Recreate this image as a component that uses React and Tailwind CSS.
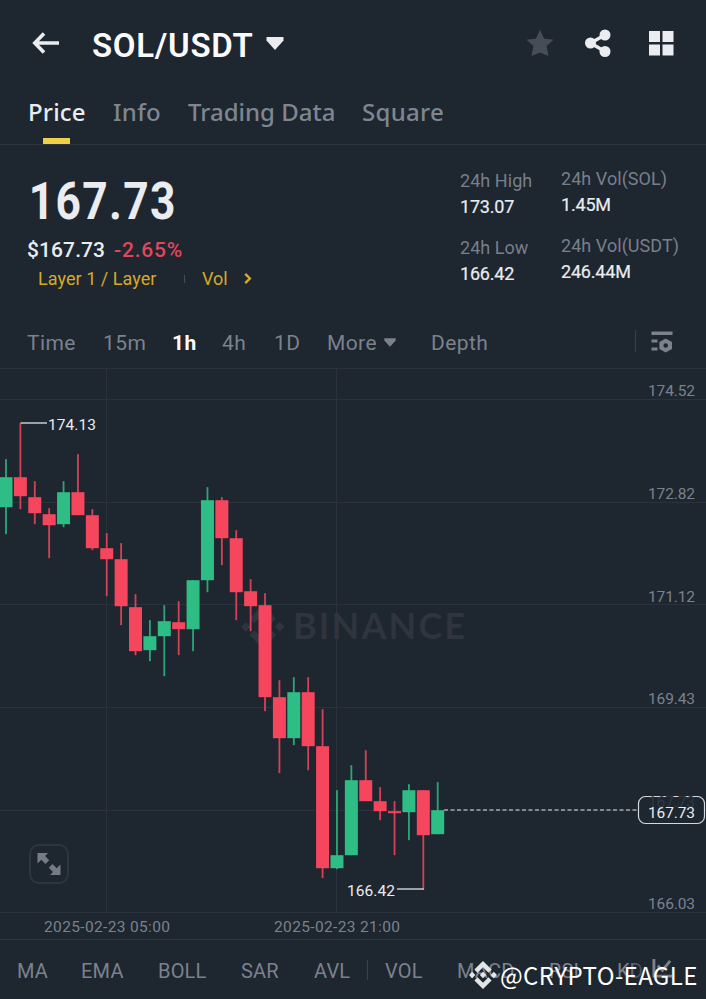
import { useState } from 'react';
import { clsx } from 'clsx';

// [direction, high, bodyTop, bodyBottom, low] in chart pixels
const candles = [
  ['up', 91, 109, 139, 166],
  ['down', 55, 109, 128, 141],
  ['down', 113, 129, 145, 156],
  ['down', 140, 146, 157, 190],
  ['up', 113, 124, 156, 159],
  ['down', 86, 124, 147, 147],
  ['down', 141, 147, 180, 182],
  ['down', 165, 180, 191, 228],
  ['down', 175, 191, 238, 257],
  ['down', 226, 239, 283, 287],
  ['up', 252, 268, 282, 293],
  ['up', 237, 253, 268, 308],
  ['down', 233, 254, 261, 287],
  ['up', 212, 212, 261, 283],
  ['up', 119, 132, 212, 224],
  ['down', 129, 132, 170, 197],
  ['down', 162, 170, 224, 252],
  ['down', 211, 223, 238, 263],
  ['down', 225, 237, 329, 343],
  ['down', 312, 329, 370, 405],
  ['up', 309, 324, 370, 377],
  ['down', 309, 324, 378, 402],
  ['down', 341, 378, 500, 510],
  ['up', 422, 487, 500, 501],
  ['up', 397, 412, 487, 487],
  ['down', 382, 412, 433, 433],
  ['down', 419, 433, 443, 452],
  ['down', 433, 443, 445, 487],
  ['up', 416, 422, 444, 472],
  ['down', 422, 422, 467, 521],
  ['up', 414, 442, 466, 466],
];

const priceAxis = [
  { y: 31, label: '174.52' },
  { y: 134, label: '172.82' },
  { y: 236.5, label: '171.12' },
  { y: 339, label: '169.43' },
  { y: 442, label: '' },
  { y: 544, label: '166.03' },
];

const tabs = [
  { name: 'Price', width: 'w-[85px] tracking-[0.2px]' },
  { name: 'Info', width: 'w-[75px] tracking-[0.3px]' },
  { name: 'Trading Data', width: 'w-[174px]' },
  { name: 'Square', width: 'w-[90px] tracking-[0.3px]' },
];

const intervals = [
  { name: 'Time', width: 'w-[76px]' },
  { name: '15m', width: 'w-[69px]' },
  { name: '1h', width: 'w-[50px]' },
  { name: '4h', width: 'w-[52px]' },
  { name: '1D', width: 'w-[53px]' },
  { name: 'More', width: 'w-[104px]' },
  { name: 'Depth', width: 'w-[70px]' },
];

const indicators = [
  { name: 'MA', width: 'w-[64px]' },
  { name: 'EMA', width: 'w-[77px]' },
  { name: 'BOLL', width: 'w-[83px]' },
  { name: 'SAR', width: 'w-[73px]' },
  { name: 'AVL', width: 'w-[71px]' },
  { name: 'VOL', width: 'w-[72px]' },
  { name: 'MACD', width: 'w-[92px]' },
  { name: 'RSI', width: 'w-[68px]' },
  { name: 'KD', width: 'w-[30px]' },
];

function CaretDown({ className }) {
  return (
    <svg viewBox="0 0 18 13" className={className} fill="currentColor">
      <path d="M0.5 0h17v3.5L9 13 0.5 3.5z" />
    </svg>
  );
}

function BinanceMark({ className }) {
  return (
    <svg viewBox="0 0 126.61 126.61" className={className} fill="currentColor">
      <path d="M38.73 53.2l24.59-24.58 24.6 24.6 14.3-14.31L63.32 0l-38.9 38.9zM0 63.31L14.3 49l14.31 14.31-14.31 14.3zM38.73 73.41l24.59 24.59 24.6-24.6 14.31 14.29-38.9 38.91-38.91-38.88zM98 63.31L112.3 49l14.31 14.3-14.31 14.32z" />
      <path d="M77.83 63.3L63.32 48.78 48.79 63.3l14.53 14.53z" />
    </svg>
  );
}

function Header() {
  return (
    <header className="flex h-[88px] items-center px-8 pb-0.5">
      <svg viewBox="0 0 28 22" className="h-[22px] w-7 text-[#eaecef]" fill="none" stroke="currentColor" strokeWidth="3.6">
        <path d="M27 11H3M12 1.5L2.8 11l9.2 9.5" />
      </svg>
      <h1 className="ml-[32px] mt-[4px] w-[160px] whitespace-nowrap font-[Roboto] text-[33px] font-semibold leading-none tracking-[0.7px] text-[#fafbfc]">
        SOL/USDT
      </h1>
      <CaretDown className="ml-3.5 h-[13px] w-[18px] text-[#eaecef]" />
      <div className="ml-auto flex items-center text-[#eaecef]">
        <svg viewBox="0 0 28 28" className="size-7 text-[#474d57]" fill="currentColor">
          <path d="M14 0.8l4 8.6 9.5 1.3-6.9 6.4 1.9 10L14 23.6 5.5 27.1l1.9-10L0.5 10.7 10 9.4z" />
        </svg>
        <svg viewBox="0 0 28 28" className="ml-[30px] size-7" fill="currentColor">
          <path d="M21 6L6.5 14 21 22.5" fill="none" stroke="currentColor" strokeWidth="3.4" />
          <circle cx="21" cy="6" r="5.5" />
          <circle cx="6.5" cy="14" r="5.5" />
          <circle cx="21" cy="22.5" r="5.5" />
        </svg>
        <svg viewBox="0 0 26 26" className="ml-[36px] size-[26px]" fill="currentColor">
          <path d="M1 1h11v11H1zM14.5 1h11v11h-11zM1 14.5h11v11H1zM14.5 14.5h11v11h-11z" />
        </svg>
      </div>
    </header>
  );
}

function TabBar({ active, onSelect }) {
  return (
    <nav className="flex h-[57px] border-b border-[#2f3640] pl-7">
      {tabs.map((tab) => (
        <button
          key={tab.name}
          type="button"
          onClick={() => onSelect(tab.name)}
          className={clsx(
            'flex flex-col items-start whitespace-nowrap text-[24px] font-medium leading-[48px]',
            tab.width,
            active === tab.name ? 'text-[#eaecef]' : 'text-[#7f8692]'
          )}
        >
          <span>{tab.name}</span>
          {active === tab.name && <span className="ml-[15px] mt-[2px] h-[6px] w-[27px] shrink-0 bg-[#f0d048]" />}
        </button>
      ))}
    </nav>
  );
}

function Stat({ label, value }) {
  return (
    <div className="h-[67px] whitespace-nowrap font-[Roboto] text-[18px]">
      <p className="leading-[26px] tracking-[0.05px] text-[#787f8b]">{label}</p>
      <p className="leading-[26px] tracking-[-0.2px] text-[#eaecef] [-webkit-text-stroke:0.2px_#eaecef]">{value}</p>
    </div>
  );
}

function Summary() {
  return (
    <section className="flex h-[173px]">
      <div className="w-[460px] pl-[27px] pt-[30px] font-[Roboto]">
        <p className="w-fit origin-left scale-x-[0.87] pl-[2px] text-[51px] font-bold leading-[54px] tracking-[1.5px] text-[#eaecef]">167.73</p>
        <p className="mt-2 flex text-[21px] font-medium leading-[26px] text-[#eaecef]">
          <span className="w-[87px] tracking-[0.1px]">$167.73</span>
          <span className="tracking-[0.8px] text-[#e0465e]">-2.65%</span>
        </p>
        <div className="mt-[3px] flex items-center pl-[11px] text-[18px] leading-[26px] text-[#d6a928]">
          <span className="w-[146px] tracking-[0.05px]">Layer 1 / Layer</span>
          <span className="h-2 w-px bg-[#474d57]" />
          <span className="ml-[17px] w-[42px]">Vol</span>
          <svg viewBox="0 0 8 12" className="mb-0.5 h-[11px] w-2" fill="none" stroke="currentColor" strokeWidth="2.6">
            <path d="M1 1l5 5-5 5" />
          </svg>
        </div>
      </div>
      <div className="w-[101px] pt-[23px]">
        <Stat label="24h High" value="173.07" />
        <Stat label="24h Low" value="166.42" />
      </div>
      <div className="pt-[21px]">
        <Stat label="24h Vol(SOL)" value="1.45M" />
        <Stat label="24h Vol(USDT)" value="246.44M" />
      </div>
    </section>
  );
}

function IntervalBar({ active, onSelect }) {
  return (
    <div className="flex h-[51px] items-center border-b border-[#2b323c] pl-[27px] font-[Roboto] text-[21px] text-[#7b828e]">
      {intervals.map(({ name, width }) => (
        <button
          key={name}
          type="button"
          onClick={() => onSelect(name)}
          className={clsx('flex items-center whitespace-nowrap pt-0.5 text-left tracking-[0.4px]', width, active === name && 'font-bold text-[#fafbfc]')}
        >
          {name}
          {name === 'More' && <CaretDown className="mb-1 ml-[7px] h-[9px] w-3" />}
        </button>
      ))}
      <span className="mb-1 ml-[134px] h-[22px] w-px bg-[#3a414c]" />
      <svg viewBox="0 0 22 22" className="mb-0.5 ml-[15px] size-[22px]" fill="currentColor">
        <path d="M0.5 0.5h21V4h-21zM0.5 8.5h6v3h-6zM0.5 16.5h6v3h-6z" />
        <path fillRule="evenodd" d="M14.7 7.5l6.3 3.5v7l-6.3 3.5L8.4 18v-7zM14.7 12.2a2.3 2.3 0 1 0 0 4.6 2.3 2.3 0 0 0 0-4.6z" />
      </svg>
    </div>
  );
}

function CandleChart() {
  return (
    <section className="relative h-[571px] border-b border-[#2f3640]">
      <svg width="706" height="570" viewBox="0 0 706 570" className="block font-[Roboto]">
        <g stroke="#2b323c" strokeWidth="1">
          {priceAxis.map((line) => (
            <path key={line.y} d={`M0 ${Math.floor(line.y) - 0.5}H706`} />
          ))}
          <path d="M106.5 0V543M336.5 0V543" />
        </g>

        {/* Backdrop logo */}
        <g className="text-[#2f343e]">
          <g transform="translate(241 236) scale(0.345)" fill="currentColor">
            <path d="M38.73 53.2l24.59-24.58 24.6 24.6 14.3-14.31L63.32 0l-38.9 38.9zM0 63.31L14.3 49l14.31 14.31-14.31 14.3zM38.73 73.41l24.59 24.59 24.6-24.6 14.31 14.29-38.9 38.91-38.91-38.88zM98 63.31L112.3 49l14.31 14.3-14.31 14.32zM77.83 63.3L63.32 48.78 48.79 63.3l14.53 14.53z" />
          </g>
          <text x="293" y="270" textLength="172" fontSize="36" fontWeight="700" fill="currentColor" className="font-[Lato]">
            BINANCE
          </text>
        </g>

        <g transform="translate(0 -0.8)">
          {candles.map(([dir, high, top, bottom, low], i) => {
            const x = 6 + i * 14.39;
            return (
              <g key={i} fill={dir === 'up' ? '#2ebd85' : '#f6465d'}>
                <rect x={x - 0.9} y={high} width="1.8" height={low - high} opacity="0.85" />
                <rect x={x - 6.5} y={top} width="13" height={bottom - top} />
              </g>
            );
          })}
        </g>

        <path d="M20.5 54H47M397 520H424" stroke="#c5cad2" strokeWidth="1.3" />
        <g fontSize="15.5" fill="#eaecef">
          <text x="48" y="61" textLength="48">174.13</text>
          <text x="347" y="526.5" textLength="48">166.42</text>
        </g>

        <g fontSize="15.5" fill="#7b828e">
          {priceAxis.map((line) => (
            <text key={line.y} x="648" y={line.y - 4} textLength="47">{line.label}</text>
          ))}
          <text x="44" y="563" textLength="126">2025-02-23 05:00</text>
          <text x="274" y="563" textLength="126">2025-02-23 21:00</text>
        </g>

        {/* Last price */}
        <path d="M444 441H637" stroke="#a3a9b3" strokeWidth="1.4" strokeDasharray="4 2.5" />
        <rect x="638.5" y="427.5" width="66" height="27" rx="7" fill="#1e262f" stroke="#d5d8dd" strokeWidth="1.2" />
        <text x="648" y="438" textLength="47" fontSize="15.5" fill="#323943">167.73</text>
        <text x="648" y="449" textLength="47" fontSize="15.5" fill="#eaecef">167.73</text>
      </svg>

      <button
        type="button"
        className="absolute left-[29px] top-[475px] flex size-10 items-center justify-center rounded-[10px] border-2 border-[#2f3540] text-[#757c88]"
      >
        <svg viewBox="0 0 24 24" className="size-6 shrink-0" fill="currentColor">
          <path d="M0.5 1H11L8 4l4.2 4.2-3.7 3.7-4.2-4.2-3.8 3.8zM23.5 23H13l3-3-4.2-4.2 3.7-3.7 4.2 4.2 3.8-3.8z" />
        </svg>
      </button>
    </section>
  );
}

function IndicatorBar() {
  return (
    <footer className="relative flex h-[59px] items-center pl-[17px] pt-[3px] font-[Roboto] text-[20px] text-[#7b828e]">
      {indicators.map(({ name, width }) => (
        <span key={name} className={clsx('block shrink-0 whitespace-nowrap tracking-[0.2px]', width)}>
          {name}
        </span>
      ))}
      <span className="absolute left-[367px] top-5 h-5 w-px bg-[#3a414c]" />

      {/* Chart settings, fading out the scrolled indicators */}
      <div className="absolute right-0 top-2 flex h-10 w-[74px] items-center bg-linear-to-r from-[#1e262f]/30 to-[#1e262f] to-30% pl-[20px]">
        <svg viewBox="0 0 22 22" className="size-[21px]" fill="none" stroke="currentColor" strokeWidth="3">
          <path d="M2 1v18h19M6 8l5 5L19 3" />
        </svg>
      </div>

      <div className="absolute left-[469px] top-[19px] flex h-8 items-center text-white">
        <BinanceMark className="size-[28px] text-[#e4e5e7]" />
        <span className="mb-px ml-[3px] whitespace-nowrap font-['Noto_Sans_CJK_SC',sans-serif] text-[24px] leading-8 tracking-[0.4px]">@CRYPTO-EAGLE</span>
      </div>
    </footer>
  );
}

function App() {
  const [tab, setTab] = useState('Price');
  const [interval, setInterval] = useState('1h');

  return (
    <div className="h-[999px] w-[706px] overflow-hidden bg-[#1e262f] font-['Noto_Sans',sans-serif]">
      <Header />
      <TabBar active={tab} onSelect={setTab} />
      <Summary />
      <IntervalBar active={interval} onSelect={setInterval} />
      <CandleChart />
      <IndicatorBar />
    </div>
  );
}

export default App;
